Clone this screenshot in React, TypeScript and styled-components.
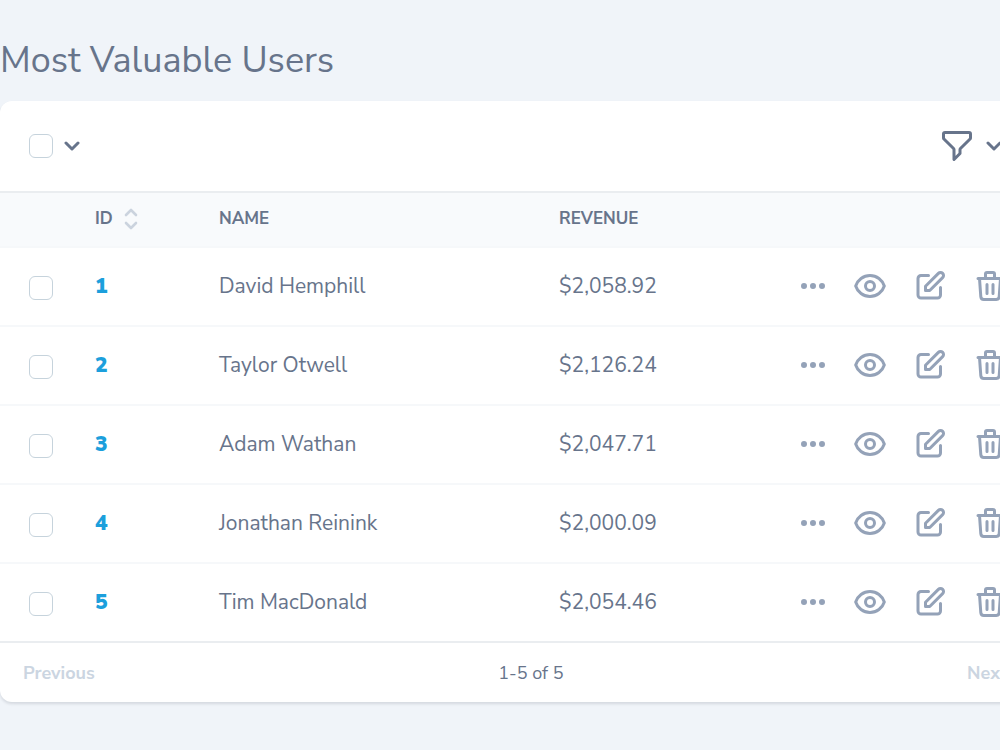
import React from "react";
import styled, { createGlobalStyle } from "styled-components";

const GlobalStyle = createGlobalStyle`
  *, *::before, *::after { box-sizing: border-box; }
  body {
    margin: 0;
    overflow-x: hidden;
    background: #f0f4f9;
    color: #67748b;
    font-family: "Nunito Sans", Nunito, Lato, "Open Sans", sans-serif;
  }
  button { font: inherit; color: inherit; background: none; border: 0; padding: 0; cursor: pointer; }
`;

const Page = styled.main`
  margin-right: -30px;
  padding: 37px 0 48px;
`;

const Title = styled.h1`
  margin: 0 0 16px;
  font-size: 36px;
  line-height: 48px;
  font-weight: 400;
`;

const Card = styled.section`
  background: #fff;
  border-radius: 12px;
  overflow: hidden;
  box-shadow: 0 2px 3px rgba(15, 23, 42, 0.12);
`;

const Toolbar = styled.div`
  display: flex;
  align-items: center;
  justify-content: space-between;
  height: 90px;
  padding: 0 28px 0 29px;
`;

const Group = styled.div<{ $gap: number }>`
  display: flex;
  align-items: center;
  gap: ${(p) => p.$gap}px;
`;

const MenuButton = styled.button<{ $gap?: number }>`
  display: flex;
  align-items: center;
  gap: ${(p) => p.$gap ?? 0}px;
`;

const Checkbox = styled.input.attrs({ type: "checkbox" })`
  appearance: none;
  display: block;
  width: 24px;
  height: 24px;
  margin: 0;
  background: #fff;
  border: 1px solid #c6d3dc;
  border-radius: 6px;
  &:checked { background: #0ea5e9; }
`;

const Table = styled.table`
  width: 100%;
  border-collapse: separate;
  border-spacing: 0;
  table-layout: fixed;
  text-align: left;
`;

const Col = styled.col<{ $width?: number }>`
  width: ${(p) => (p.$width ? `${p.$width}px` : "auto")};
`;

const HeadCell = styled.th`
  height: 55px;
  padding: 0 0 2px;
  background: #f8fafc;
  border-top: 2px solid #eaedf0;
  font-size: 17px;
  line-height: 24px;
  font-weight: 700;
`;

const SortButton = styled.button`
  display: flex;
  align-items: center;
  gap: 10px;
  font-weight: 700;
`;

const Cell = styled.td<{ $kind?: "select" | "id" | "actions" }>`
  height: 79px;
  padding: ${(p) => (p.$kind === "select" ? "3px 0 0 29px" : p.$kind === "actions" ? "0 22px 1px 0" : "0 0 1px")};
  border-top: 2px solid #f6f8fa;
  font-size: 21px;
  line-height: 28px;
  font-weight: ${(p) => (p.$kind === "id" ? 900 : 400)};
  color: ${(p) => (p.$kind === "id" ? "#1c9fdc" : "inherit")};
`;

const Actions = styled.div`
  display: flex;
  align-items: center;
  justify-content: flex-end;
  gap: 24px;
  color: #94a2b8;
`;

const IconButton = styled.button`
  display: flex;
`;

const Footer = styled.nav`
  display: flex;
  justify-content: space-between;
  align-items: center;
  height: 61px;
  padding: 0 23px;
  border-top: 2px solid #eaedf0;
  font-size: 18px;
  line-height: 24px;
`;

const PageButton = styled.button`
  color: #cbd5e1;
  font-weight: 700;
`;

const icons = {
  filter:
    "M3 4a1 1 0 011-1h16a1 1 0 011 1v2.586a1 1 0 01-.293.707l-6.414 6.414a1 1 0 00-.293.707V17l-4 4v-6.586a1 1 0 00-.293-.707L3.293 7.293A1 1 0 013 6.586V4z",
  eye: "M15 12a3 3 0 11-6 0 3 3 0 016 0zM2.458 12C3.732 7.943 7.523 5 12 5c4.478 0 8.268 2.943 9.542 7-1.274 4.057-5.064 7-9.542 7-4.477 0-8.268-2.943-9.542-7z",
  edit: "M11 5H6a2 2 0 00-2 2v11a2 2 0 002 2h11a2 2 0 002-2v-5m-1.414-9.414a2 2 0 112.828 2.828L11.828 15H9v-2.828l8.586-8.586z",
  trash:
    "M19 7l-.867 12.142A2 2 0 0116.138 21H7.862a2 2 0 01-1.995-1.858L5 7m5 4v6m4-6v6m1-10V4a1 1 0 00-1-1h-4a1 1 0 00-1 1v3M4 7h16",
};

function Icon({ name }: { name: keyof typeof icons }) {
  return (
    <svg width="36" height="36" viewBox="0 0 24 24" fill="none" stroke="currentColor" strokeWidth="2" strokeLinecap="round" strokeLinejoin="round" aria-hidden="true">
      <path d={icons[name]} />
    </svg>
  );
}

function Dots() {
  return (
    <svg width="30" height="30" viewBox="0 0 20 20" fill="currentColor" aria-hidden="true">
      <path d="M6 10a2 2 0 11-4 0 2 2 0 014 0zM12 10a2 2 0 11-4 0 2 2 0 014 0zM16 12a2 2 0 100-4 2 2 0 000 4z" />
    </svg>
  );
}

function Chevron() {
  return (
    <svg width="16" height="10" viewBox="0 0 16 10" fill="none" stroke="currentColor" strokeWidth="3" strokeLinecap="round" strokeLinejoin="round" aria-hidden="true">
      <path d="M2 2l6 6 6-6" />
    </svg>
  );
}

function SortArrows() {
  return (
    <svg width="16" height="24" viewBox="0 0 16 24" fill="none" stroke="#cbd3de" strokeWidth="2.6" strokeLinecap="round" strokeLinejoin="round" aria-hidden="true">
      <path d="M3 8l5-5 5 5M3 16l5 5 5-5" />
    </svg>
  );
}

const users = [
  { id: 1, name: "David Hemphill", revenue: "$2,058.92" },
  { id: 2, name: "Taylor Otwell", revenue: "$2,126.24" },
  { id: 3, name: "Adam Wathan", revenue: "$2,047.71" },
  { id: 4, name: "Jonathan Reinink", revenue: "$2,000.09" },
  { id: 5, name: "Tim MacDonald", revenue: "$2,054.46" },
];

export default function App() {
  return (
    <>
      <GlobalStyle />
      <Page>
        <Title>Most Valuable Users</Title>
        <Card>
          <Toolbar>
            <Group $gap={11}>
              <Checkbox aria-label="Select all users" />
              <MenuButton aria-label="Selection options">
                <Chevron />
              </MenuButton>
            </Group>
            <MenuButton $gap={11} aria-label="Filter users">
              <Icon name="filter" />
              <Chevron />
            </MenuButton>
          </Toolbar>
          <Table>
            <colgroup>
              <Col $width={95} />
              <Col $width={124} />
              <Col />
              <Col $width={230} />
              <Col $width={241} />
            </colgroup>
            <thead>
              <tr>
                <HeadCell />
                <HeadCell>
                  <SortButton>
                    ID
                    <SortArrows />
                  </SortButton>
                </HeadCell>
                <HeadCell>NAME</HeadCell>
                <HeadCell>REVENUE</HeadCell>
                <HeadCell />
              </tr>
            </thead>
            <tbody>
              {users.map((u) => (
                <tr key={u.id}>
                  <Cell $kind="select">
                    <Checkbox aria-label={`Select ${u.name}`} />
                  </Cell>
                  <Cell $kind="id">{u.id}</Cell>
                  <Cell>{u.name}</Cell>
                  <Cell>{u.revenue}</Cell>
                  <Cell $kind="actions">
                    <Actions>
                      <IconButton aria-label={`More actions for ${u.name}`}>
                        <Dots />
                      </IconButton>
                      <IconButton aria-label={`View ${u.name}`}>
                        <Icon name="eye" />
                      </IconButton>
                      <IconButton aria-label={`Edit ${u.name}`}>
                        <Icon name="edit" />
                      </IconButton>
                      <IconButton aria-label={`Delete ${u.name}`}>
                        <Icon name="trash" />
                      </IconButton>
                    </Actions>
                  </Cell>
                </tr>
              ))}
            </tbody>
          </Table>
          <Footer aria-label="Pagination">
            <PageButton>Previous</PageButton>
            <span>1-5 of 5</span>
            <PageButton>Next</PageButton>
          </Footer>
        </Card>
      </Page>
    </>
  );
}
